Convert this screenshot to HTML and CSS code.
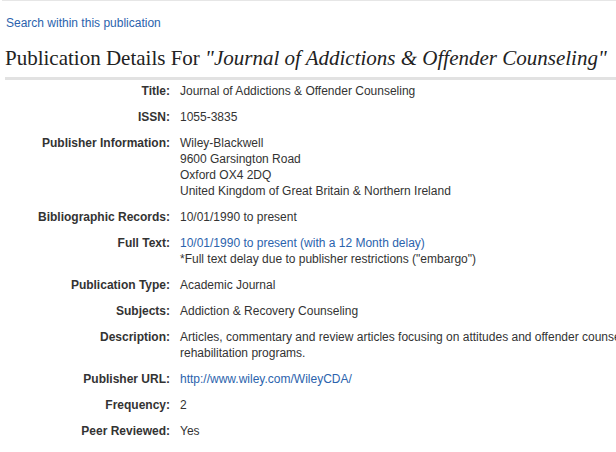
FILE: index.html
```html
<!DOCTYPE html>
<html>
<head>
<meta charset="utf-8">
<link rel="stylesheet" href="styles.css">
</head>
<body>
<div class="page">
  <div class="topline"></div>
  <a class="search-link" href="#">Search within this publication</a>
  <h1 class="heading">Publication Details For <em>"Journal of Addictions &amp; Offender Counseling"</em></h1>
  <dl class="details">
    <div class="row"><dt>Title:</dt><dd>Journal of Addictions &amp; Offender Counseling</dd></div>
    <div class="row"><dt>ISSN:</dt><dd>1055-3835</dd></div>
    <div class="row"><dt>Publisher Information:</dt><dd>Wiley-Blackwell<br>9600 Garsington Road<br>Oxford OX4 2DQ<br>United Kingdom of Great Britain &amp; Northern Ireland</dd></div>
    <div class="row"><dt>Bibliographic Records:</dt><dd>10/01/1990 to present</dd></div>
    <div class="row"><dt>Full Text:</dt><dd><a href="#">10/01/1990 to present (with a 12 Month delay)</a><br>*Full text delay due to publisher restrictions ("embargo")</dd></div>
    <div class="row"><dt>Publication Type:</dt><dd>Academic Journal</dd></div>
    <div class="row"><dt>Subjects:</dt><dd>Addiction &amp; Recovery Counseling</dd></div>
    <div class="row"><dt>Description:</dt><dd class="nowrap">Articles, commentary and review articles focusing on attitudes and offender counseling in corrections and<br>rehabilitation programs.</dd></div>
    <div class="row"><dt>Publisher URL:</dt><dd><a href="#">http://www.wiley.com/WileyCDA/</a></dd></div>
    <div class="row"><dt>Frequency:</dt><dd>2</dd></div>
    <div class="row"><dt>Peer Reviewed:</dt><dd>Yes</dd></div>
  </dl>
</div>
</body>
</html>
```

FILE: styles.css
```css
html, body {
  margin: 0;
  padding: 0;
  background: #fff;
  overflow: hidden;
}
.page {
  width: 900px;
  font-family: "Liberation Sans", Arial, sans-serif;
  font-size: 12px;
  line-height: 16px;
  color: #333;
}
.topline {
  height: 1px;
  background: #e6e6e6;
  margin-left: 2px;
}
a {
  color: #2b63ad;
  text-decoration: none;
}
.search-link {
  display: block;
  margin: 14px 0 0 6px;
}
.heading {
  margin: 14px 0 0 5px;
  padding-bottom: 6px;
  border-bottom: 3px solid #e2e2e2;
  font-family: "Liberation Serif", Georgia, serif;
  font-weight: normal;
  font-size: 21px;
  line-height: 26px;
  color: #222;
  white-space: nowrap;
}
.heading em {
  font-style: italic;
}
.details {
  margin: 3px 0 0 0;
  display: flex;
  flex-direction: column;
  gap: 10px;
}
.row {
  display: flex;
  gap: 10px;
}
.row dt {
  width: 170px;
  flex: none;
  text-align: right;
  font-weight: bold;
}
.row dd {
  margin: 0;
}
.nowrap {
  white-space: nowrap;
}
```
